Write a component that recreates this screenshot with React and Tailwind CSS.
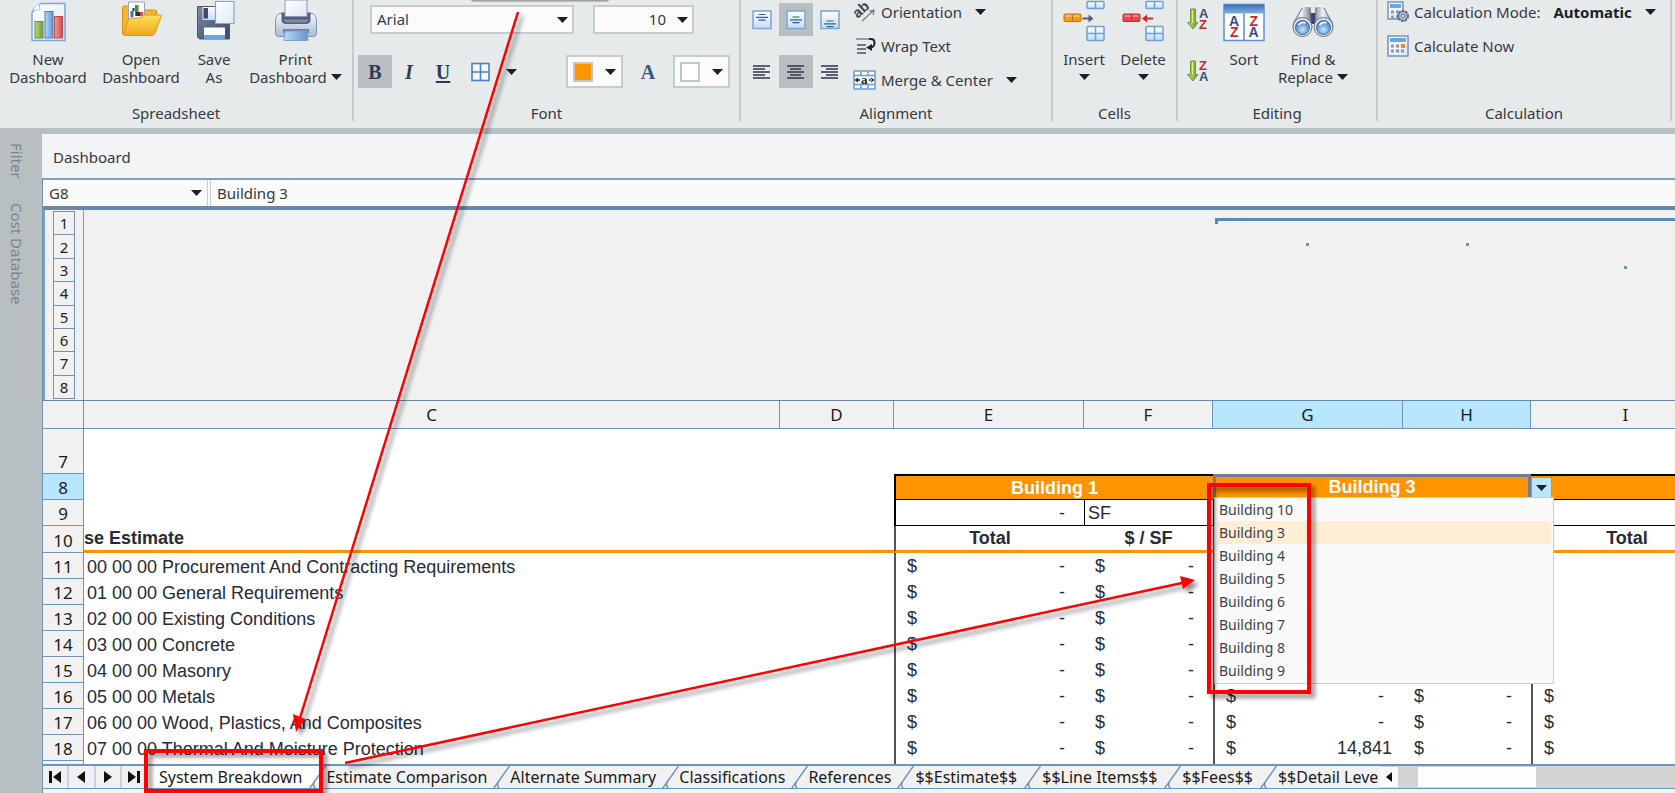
import React from "react";

const UI = "font-['Noto_Sans','Open_Sans',sans-serif]";

function Caret() {
  return (
    <svg className="shrink-0" width="11" height="6" viewBox="0 0 11 6" aria-hidden="true">
      <path d="M0 0h11L5.500 6z" fill="#1b1f29" />
    </svg>
  );
}

function Gradients() {
  return (
    <svg className="absolute" width="0" height="0" aria-hidden="true">
      <defs>
        <linearGradient id="paper" x1="0" y1="0" x2="1" y2="1">
          <stop offset="0" stopColor="#ffffff" />
          <stop offset="1" stopColor="#dfe9f5" />
        </linearGradient>
        <linearGradient id="gold" x1="0" y1="0" x2="0" y2="1">
          <stop offset="0" stopColor="#fde25a" />
          <stop offset="1" stopColor="#f2a51c" />
        </linearGradient>
        <linearGradient id="green" x1="0" y1="0" x2="1" y2="0">
          <stop offset="0" stopColor="#b9d67c" />
          <stop offset="1" stopColor="#6d9f3a" />
        </linearGradient>
        <linearGradient id="blue" x1="0" y1="0" x2="1" y2="0">
          <stop offset="0" stopColor="#b9d8f5" />
          <stop offset="1" stopColor="#5f96d0" />
        </linearGradient>
        <linearGradient id="red" x1="0" y1="0" x2="1" y2="0">
          <stop offset="0" stopColor="#f09c9a" />
          <stop offset="1" stopColor="#d04c4e" />
        </linearGradient>
        <linearGradient id="slate" x1="0" y1="0" x2="1" y2="1">
          <stop offset="0" stopColor="#7e8ba6" />
          <stop offset="1" stopColor="#3c4862" />
        </linearGradient>
        <linearGradient id="silver" x1="0" y1="0" x2="1" y2="0">
          <stop offset="0" stopColor="#8a90a3" />
          <stop offset="0.450" stopColor="#f4f5f8" />
          <stop offset="1" stopColor="#777e92" />
        </linearGradient>
        <linearGradient id="chrome" x1="0" y1="0" x2="0" y2="1">
          <stop offset="0" stopColor="#f2f5fa" />
          <stop offset="1" stopColor="#a9bad4" />
        </linearGradient>
        <linearGradient id="sky" x1="0" y1="0" x2="0" y2="1">
          <stop offset="0" stopColor="#ffffff" />
          <stop offset="1" stopColor="#c2dcf4" />
        </linearGradient>
        <linearGradient id="band" x1="0" y1="0" x2="0" y2="1">
          <stop offset="0" stopColor="#3b70b4" />
          <stop offset="1" stopColor="#7fb0e2" />
        </linearGradient>
        <radialGradient id="lens" cx="0.500" cy="0.650" r="0.600">
          <stop offset="0" stopColor="#c8e4fb" />
          <stop offset="1" stopColor="#3f7dc8" />
        </radialGradient>
      </defs>
    </svg>
  );
}

function ChartDocIcon() {
  return (
    <svg width="42" height="42" viewBox="0 0 42 42" aria-hidden="true">
      <path d="M13.500 3.500H38v37H5v-28z" fill="url(#paper)" stroke="#7ea6d6" strokeWidth="1.500" />
      <path d="M12 3.500L5 9.500l2 .5h6z" fill="#fff" stroke="#a9c4e4" />
      <rect x="8" y="21.500" width="8" height="16.500" fill="url(#green)" stroke="#6a9440" />
      <rect x="18" y="11.500" width="8" height="26.500" fill="url(#blue)" stroke="#4f7fb8" />
      <rect x="27.500" y="16.500" width="8" height="21.500" fill="url(#red)" stroke="#c04a4b" />
    </svg>
  );
}

function FolderIcon() {
  return (
    <svg width="42" height="42" viewBox="0 0 42 42" aria-hidden="true">
      <path d="M2.500 34V8q0-2 2-2h5l3 4h22q2 0 2 2v12z" fill="#f6b924" stroke="#d48c11" />
      <path d="M8.500 2h16v18l-16 6z" fill="#fff" stroke="#9aa3b0" />
      <path d="M10.500 11h3v6h-3z" fill="#3b6fc0" />
      <path d="M15 5h3.500v11H15z" fill="#4d8e38" />
      <path d="M12.500 8h2v3h-2zM16 12h4v4h-4z" fill="#273246" />
      <path d="M20 12h3v4h-3z" fill="#d94848" />
      <path d="M8.500 19.500q.6-1.500 2.500-1.500h9l4-3h16.500q1.200 0 .7 1.500L34.500 34q-.6 1.500-2.500 1.500H4.500q-1.500 0-1-1.500z" fill="url(#gold)" stroke="#db9617" />
    </svg>
  );
}

function SaveAsIcon() {
  return (
    <svg width="42" height="42" viewBox="0 0 42 42" aria-hidden="true">
      <path d="M4.500 6.500h32V39H6.500l-2-2z" fill="url(#slate)" stroke="#4a5670" />
      <rect x="9.500" y="7" width="16" height="13" fill="url(#sky)" />
      <rect x="10.500" y="8" width="4.500" height="10.500" fill="#3f4a62" />
      <rect x="11" y="27.500" width="21" height="11.500" fill="#fbfcfe" />
      <rect x="11" y="35" width="21" height="4" fill="#6fa3dc" />
      <path d="M22.500 1.500h18.500v22H22.500z" fill="url(#paper)" stroke="#8aa3c6" strokeWidth="1.200" />
    </svg>
  );
}

function PrinterIcon() {
  return (
    <svg width="42" height="42" viewBox="0 0 42 42" aria-hidden="true">
      <path d="M4 13.500h34q3 2 3.500 6v14q0 3-3 3h-35q-3 0-3-3v-14q.5-4 3.500-6z" fill="url(#chrome)" stroke="#7f95b8" />
      <path d="M6.500 12.500h29v7q0 4.500-5 4.500H11.500q-5 0-5-4.500z" fill="#566179" />
      <path d="M8.500 19.500h25q-1 3-4 3h-17q-3 0-4-3z" fill="#808ba3" />
      <path d="M10 0h22v16.500H10z" fill="url(#paper)" stroke="#8a9ab6" />
      <path d="M8 29h26v4H8z" fill="#6c80a3" />
      <path d="M10 31h22l1 9.500H9z" fill="url(#blue)" stroke="#7ba0cd" />
    </svg>
  );
}

function BordersIcon() {
  return (
    <svg width="20" height="20" viewBox="0 0 20 20" fill="#f4f8fc" stroke="#4d80bf" strokeWidth="1.600" aria-hidden="true">
      <rect x="1" y="1.500" width="17" height="17" />
      <path d="M9.500 1.500v17M1 10h17" />
    </svg>
  );
}

function VAlignIcon({ y }) {
  return (
    <svg width="20" height="20" viewBox="0 0 20 20" aria-hidden="true">
      <rect x="1" y="1" width="18" height="17.500" fill="url(#sky)" stroke="#7ba5d6" strokeWidth="1.500" />
      <g stroke="#2c5fa4" strokeWidth="1.200" transform={`translate(0 ${y})`}>
        <path d="M6.500 0h7M4 2.800h12M6.500 5.600h7" />
      </g>
    </svg>
  );
}

function HAlignIcon({ path }) {
  return (
    <svg width="18" height="16" viewBox="0 0 18 16" aria-hidden="true">
      <path d={path} stroke="#2c3448" strokeWidth="1.600" />
    </svg>
  );
}

function OrientationIcon() {
  return (
    <svg width="24" height="24" viewBox="0 0 24 24" aria-hidden="true">
      <text x="5" y="19" transform="rotate(-42 5 19)" fontFamily="Liberation Sans" fontWeight="700" fontSize="15" fill="#3a4150">ab</text>
      <path d="M9.500 21.500L22 10M22 10l-5 1M22 10l-1 5" stroke="#7a7f8a" strokeWidth="1.400" fill="none" />
    </svg>
  );
}

function WrapIcon() {
  return (
    <svg width="22" height="22" viewBox="0 0 22 22" fill="none" aria-hidden="true">
      <path d="M2 4h15" stroke="#7b8190" strokeWidth="1.500" />
      <path d="M3 10h9M3 14h9M3 18h9" stroke="#4b5262" strokeWidth="1.500" />
      <path d="M15 4h2q3.500 0 3.500 4t-4 4.500" stroke="#20242f" strokeWidth="2" />
      <path d="M12 12.500l6-3.500v7z" fill="#20242f" />
    </svg>
  );
}

function MergeIcon() {
  return (
    <svg width="23" height="20" viewBox="0 0 23 20" aria-hidden="true">
      <rect x="1" y="1" width="21" height="18" fill="#fff" stroke="#6d9bd0" strokeWidth="1.500" />
      <path d="M1 5.500h21M1 14.500h21M8 1v4.500M15 1v4.500M8 14.500V19M15 14.500V19" stroke="#6d9bd0" strokeWidth="1.500" />
      <path d="M1.500 10l3.500-2.500v5zM21.500 10L18 7.500v5zM4 9.300h3v1.400H4zM16 9.300h3v1.400h-3z" fill="#20242f" />
      <text x="8" y="13.500" fontFamily="Liberation Serif" fontWeight="700" fontSize="13" fill="#20242f">a</text>
    </svg>
  );
}

function CellsIcon({ remove }) {
  const tone = remove ? "#e8484c" : "#f49a16";
  const edge = remove ? "#b92f33" : "#c77308";
  return (
    <svg width="44" height="42" viewBox="0 0 44 42" aria-hidden="true">
      <g fill="url(#sky)" stroke="#6f9fd6" strokeWidth="1.500">
        <rect x="25" y="1.500" width="17" height="7" rx="1" />
        <path d="M33.500 1.500v7" />
        <rect x="25" y="26.500" width="17" height="14" rx="1" />
        <path d="M33.500 26.500v14M25 33.500h17" />
      </g>
      <rect x="2" y="14" width="17" height="7.500" rx="1" fill={tone} stroke={edge} />
      <path d="M3.500 16h6M11.500 16h6" stroke="#fff" strokeOpacity="0.500" strokeWidth="1.500" />
      <path d="M10.500 14v7.500" stroke={edge} />
      {remove ? (
        <path d="M32 17.500h-6v-3l-5 4 5 4v-3h6z" fill="#cf2529" />
      ) : (
        <path d="M20.500 17.500h6v-3l5 4-5 4v-3h-6z" fill="#56617c" />
      )}
    </svg>
  );
}

function SortArrowIcon({ top, bottom, topColor, bottomColor }) {
  return (
    <svg width="22" height="24" viewBox="0 0 22 24" aria-hidden="true">
      <path d="M3.500 1h5v13.500H11L6 21 .5 14.500h3z" fill="url(#green)" stroke="#6b9a2f" />
      <path d="M5.500 2v13" stroke="#e9ee7a" strokeWidth="1.200" />
      <text x="12" y="10" fontFamily="Liberation Sans" fontWeight="700" fontSize="13" fill={topColor}>{top}</text>
      <text x="12" y="21" fontFamily="Liberation Sans" fontWeight="700" fontSize="13" fill={bottomColor}>{bottom}</text>
    </svg>
  );
}

function SortIcon() {
  return (
    <svg width="42" height="42" viewBox="0 0 42 42" aria-hidden="true">
      <rect x="1" y="4.500" width="40" height="36" fill="#fff" stroke="#5c8fce" strokeWidth="1.500" />
      <rect x="1" y="4.500" width="40" height="9" fill="url(#band)" />
      <path d="M21 13v27" stroke="#5c8fce" strokeWidth="1.500" />
      <g fontFamily="Liberation Sans" fontWeight="700" fontSize="14">
        <text x="6" y="26" fill="#35507f">A</text>
        <text x="7" y="37" fill="#c42a2e">Z</text>
        <text x="26.500" y="26" fill="#c42a2e">Z</text>
        <text x="25.500" y="37" fill="#35507f">A</text>
      </g>
    </svg>
  );
}

function BinocularsIcon() {
  return (
    <svg width="42" height="42" viewBox="0 0 42 42" aria-hidden="true">
      <rect x="17" y="13" width="8" height="11" fill="#39456a" />
      <path d="M10 8q3-3 8-1l1 15-2 8-16-3q0-5 4-10z" fill="url(#silver)" stroke="#6c7388" />
      <path d="M32 8q-3-3-8-1l-1 15 2 8 16-3q0-5-4-10z" fill="url(#silver)" stroke="#6c7388" />
      <path d="M10 7.500q4-3.500 8-.5M24 7q4-3 8 .5" stroke="#f3f4f7" strokeWidth="2" fill="none" />
      <circle cx="10.500" cy="27" r="9.500" fill="#dfe3ea" stroke="#6b7288" />
      <circle cx="31.500" cy="27" r="9.500" fill="#dfe3ea" stroke="#6b7288" />
      <circle cx="10.500" cy="27.500" r="7" fill="url(#lens)" stroke="#44699f" />
      <circle cx="31.500" cy="27.500" r="7" fill="url(#lens)" stroke="#44699f" />
      <path d="M6.500 25q3-4 7-2M27.500 25q3-4 7-2" stroke="#fff" strokeWidth="1.800" fill="none" />
    </svg>
  );
}

function CalculatorIcon({ gear }) {
  return (
    <svg width="22" height="22" viewBox="0 0 22 22" aria-hidden="true">
      <rect x="1" y="1" width={gear ? 15 : 20} height={gear ? 17 : 20} fill="url(#paper)" stroke="#6f93c6" strokeWidth="1.500" />
      <rect x="3" y="3" width={gear ? 11 : 16} height="4" fill="#62abe8" />
      <g fill="#8598bb">
        <rect x="4" y="9.500" width="3" height="3" />
        <rect x="9" y="9.500" width="3" height="3" />
        <rect x="4" y="14.500" width="3" height="3" />
        <rect x="9" y="14.500" width="3" height="3" />
      </g>
      {gear ? (
        <g>
          <circle cx="16" cy="15" r="5" fill="#aeb8c9" stroke="#5b6a86" strokeWidth="2" strokeDasharray="2.600 1" />
          <circle cx="16" cy="15" r="4.300" fill="#b8c2d2" stroke="#65738e" />
          <circle cx="16" cy="15" r="1.700" fill="#eef1f5" stroke="#5b6a86" />
        </g>
      ) : (
        <g>
          <rect x="14" y="9" width="4" height="4" fill="#f08c1c" />
          <rect x="14" y="14.500" width="3" height="3" fill="#8598bb" />
        </g>
      )}
    </svg>
  );
}

function Group({ label, width, children }) {
  return (
    <section className={`${width} flex h-[121px] shrink-0 flex-col border-r-2 border-[#c5cacd]`}>
      <div className="flex h-[105px] items-start">{children}</div>
      <h2 className="text-center text-[15px] leading-4">{label}</h2>
    </section>
  );
}

function BigButton({ width, icon, lines, caret, caretBelow }) {
  return (
    <button type="button" className={`${width} flex shrink-0 flex-col items-center`}>
      {icon}
      <span className="mt-2 text-[15px] leading-[18px] whitespace-nowrap">
        {lines.map((line, i) => (
          <span key={line} className="flex items-center justify-center gap-1">
            {line}
            {caret && i === lines.length - 1 && <Caret />}
          </span>
        ))}
        {caretBelow && (
          <span className="flex h-[18px] items-center justify-center">
            <Caret />
          </span>
        )}
      </span>
    </button>
  );
}

function RowButton({ icon, children, caret }) {
  return (
    <button type="button" className="flex h-6 items-center gap-[5px] text-[15px] leading-6 whitespace-nowrap">
      <span className="flex w-[23px] justify-center">{icon}</span>
      {children}
      {caret && (
        <span className="ml-2">
          <Caret />
        </span>
      )}
    </button>
  );
}

function ToggleButton({ label, on, children }) {
  return (
    <button
      type="button"
      aria-label={label}
      aria-pressed={!!on}
      className={`flex h-[33px] w-[34px] items-center justify-center ${on ? "bg-[#b8bfc2]" : ""}`}
    >
      {children}
    </button>
  );
}

function Combo({ label, value, options, width, alignRight }) {
  return (
    <div className={`${width} relative flex h-[29px] items-center border-2 border-[#c8cccf] bg-[#fbfbfb]`}>
      <select
        aria-label={label}
        defaultValue={value}
        className={`h-full w-full appearance-none bg-transparent pr-[26px] pl-[5px] text-[15px] outline-none ${alignRight ? "text-right" : ""}`}
      >
        {options.map((o) => (
          <option key={o}>{o}</option>
        ))}
      </select>
      <span className="pointer-events-none absolute right-1">
        <Caret />
      </span>
    </div>
  );
}

function Swatch({ label, color }) {
  return (
    <button type="button" aria-label={label} className="flex h-[33px] w-[57px] items-center gap-3 border-2 border-[#c8cccf] bg-[#fbfbfb] pl-[5px]">
      <span className={`size-5 border-2 border-[#c3c6c9] ${color}`} />
      <Caret />
    </button>
  );
}

function Ribbon() {
  return (
    <header className="flex h-32 shrink-0 overflow-hidden bg-[#e7eaea] text-[#343a42]">
      <Group label="Spreadsheet" width="w-[354px]">
        <BigButton width="w-[96px]" icon={<ChartDocIcon />} lines={["New", "Dashboard"]} />
        <BigButton width="w-[90px]" icon={<FolderIcon />} lines={["Open", "Dashboard"]} />
        <BigButton width="w-[56px]" icon={<SaveAsIcon />} lines={["Save", "As"]} />
        <BigButton width="w-[107px]" icon={<PrinterIcon />} lines={["Print", "Dashboard"]} caret />
      </Group>
      <Group label="Font" width="w-[387px]">
        <div className="flex flex-col gap-[21px] pt-[5px]">
          <div className="flex gap-[19px] pl-4">
            <Combo label="Font family" value="Arial" options={["Arial", "Calibri"]} width="w-[204px]" />
            <Combo label="Font size" value="10" options={["8", "10", "12"]} width="w-[101px]" alignRight />
          </div>
          <div className="flex items-center pl-1 font-['Liberation_Serif',serif] text-xl text-[#2f3b55]">
            <ToggleButton label="Bold" on><span className="font-bold">B</span></ToggleButton>
            <ToggleButton label="Italic"><span className="font-bold italic">I</span></ToggleButton>
            <ToggleButton label="Underline"><span className="font-bold underline underline-offset-2">U</span></ToggleButton>
            <button type="button" aria-label="Borders" className="ml-[11px] flex items-center gap-[15px]">
              <BordersIcon />
              <Caret />
            </button>
            <span className="ml-[49px] flex items-center gap-[17px]">
              <Swatch label="Fill color" color="bg-[#ff9300]" />
              <span className="flex w-4 justify-center font-bold text-[#35588c]">A</span>
              <Swatch label="Font color" color="bg-white" />
            </span>
          </div>
        </div>
      </Group>
      <Group label="Alignment" width="w-[312px]">
        <div className="grid grid-cols-[34px_34px_34px] gap-y-[19px] pt-[3px] pl-1">
          <ToggleButton label="Align top"><VAlignIcon y={4.500} /></ToggleButton>
          <ToggleButton label="Align middle" on><VAlignIcon y={7} /></ToggleButton>
          <ToggleButton label="Align bottom"><VAlignIcon y={11} /></ToggleButton>
          <ToggleButton label="Align left"><HAlignIcon path="M0 2h17M0 5h12M0 8h17M0 11h12M0 14h17" /></ToggleButton>
          <ToggleButton label="Align center" on><HAlignIcon path="M0 2h17M3 5h11M0 8h17M3 11h11M0 14h17" /></ToggleButton>
          <ToggleButton label="Align right"><HAlignIcon path="M0 2h17M5 5h12M0 8h17M5 11h12M0 14h17" /></ToggleButton>
        </div>
        <div className="ml-[6px] flex flex-col items-start gap-[10px]">
          <RowButton icon={<OrientationIcon />} caret>Orientation</RowButton>
          <RowButton icon={<WrapIcon />}>Wrap Text</RowButton>
          <RowButton icon={<MergeIcon />} caret>Merge &amp; Center</RowButton>
        </div>
      </Group>
      <Group label="Cells" width="w-[125px]">
        <BigButton width="w-[62px]" icon={<CellsIcon />} lines={["Insert"]} caretBelow />
        <BigButton width="w-[56px]" icon={<CellsIcon remove />} lines={["Delete"]} caretBelow />
      </Group>
      <Group label="Editing" width="w-[200px]">
        <div className="flex w-9 flex-col items-center gap-7 pt-2 pl-1">
          <button type="button" aria-label="Sort ascending">
            <SortArrowIcon top="A" bottom="Z" topColor="#35507f" bottomColor="#c42a2e" />
          </button>
          <button type="button" aria-label="Sort descending">
            <SortArrowIcon top="Z" bottom="A" topColor="#c42a2e" bottomColor="#35507f" />
          </button>
        </div>
        <BigButton width="w-[60px]" icon={<SortIcon />} lines={["Sort"]} />
        <BigButton width="w-[78px]" icon={<BinocularsIcon />} lines={["Find &", "Replace"]} caret />
      </Group>
      <Group label="Calculation" width="w-[294px]">
        <div className="ml-2 flex flex-col items-start gap-[10px]">
          <RowButton icon={<CalculatorIcon gear />} caret>
            Calculation Mode: <strong className="ml-2 font-bold text-[#1b1f29]">Automatic</strong>
          </RowButton>
          <RowButton icon={<CalculatorIcon />}>Calculate Now</RowButton>
        </div>
      </Group>
    </header>
  );
}

function OutlinePanel() {
  return (
    <div className="flex h-[191px] shrink-0 border-b border-[#6488ab] bg-[#f1f1f1]">
      <div className="w-[41px] border-r border-l-2 border-[#7fa0c4] px-2 pt-px">
        <div className="flex h-[188px] flex-col divide-y divide-[#6f94bc] border border-[#6f94bc]">
          {[1, 2, 3, 4, 5, 6, 7, 8].map((n) => (
            <button key={n} type="button" className="flex-1 text-center text-[15px] leading-5 text-[#222]">
              {n}
            </button>
          ))}
        </div>
      </div>
      <div className="relative flex-1 overflow-hidden">
        <div className="absolute top-2 right-0 left-[1131px] h-[6px] border-t-3 border-l-3 border-[#5f88b5]" />
        <span className="absolute top-[33px] left-[1222px] size-[3px] bg-[#6f94bc]" />
        <span className="absolute top-[33px] left-[1382px] size-[3px] bg-[#6f94bc]" />
        <span className="absolute top-14 left-[1540px] size-[3px] bg-[#6f94bc]" />
      </div>
    </div>
  );
}

const divisions = [
  { name: "00 00 00 Procurement And Contracting Requirements" },
  { name: "01 00 00 General Requirements" },
  { name: "02 00 00 Existing Conditions" },
  { name: "03 00 00 Concrete" },
  { name: "04 00 00 Masonry" },
  { name: "05 00 00 Metals", g: "-", h: "-" },
  { name: "06 00 00 Wood, Plastics, And Composites", g: "-", h: "-" },
  { name: "07 00 00 Thermal And Moisture Protection", g: "14,841", h: "-" },
];

const buildings = ["Building 10", "Building 3", "Building 4", "Building 5", "Building 6", "Building 7", "Building 8", "Building 9"];

function RowHead({ n, selected }) {
  return (
    <th
      scope="row"
      className={`${UI} border-r border-b border-[#6f94bc] text-center align-bottom text-[17px] leading-[22px] font-normal text-[#1b1b1b] ${selected ? "bg-[#b8e6fc]" : "bg-[#f1f1f1]"}`}
    >
      {n}
    </th>
  );
}

function Money({ value, open, wall }) {
  const shown = value || open;
  return (
    <td className={`px-[11px] ${wall ? "border-l-2 border-[#555]" : ""}`}>
      {shown && (
        <div className="flex justify-between leading-6">
          <span>$</span>
          {value && <span className={value === "-" ? "pr-2" : ""}>{value}</span>}
        </div>
      )}
    </td>
  );
}

function Sheet() {
  const head = "border-r border-b border-[#6f94bc] text-[17px] font-normal text-[#1b1b1b]";
  return (
    <div className="min-h-0 flex-1 overflow-hidden bg-white">
      <table className="w-[1678px] table-fixed border-separate border-spacing-0 font-['Liberation_Sans',Arial,sans-serif] text-lg leading-[22px] text-[#252c36]">
        <colgroup>
          <col className="w-[41px]" />
          <col className="w-[696px]" />
          <col className="w-[114px]" />
          <col className="w-[190px]" />
          <col className="w-[129px]" />
          <col className="w-[190px]" />
          <col className="w-[128px]" />
          <col className="w-[190px]" />
        </colgroup>
        <thead className={UI}>
          <tr className="h-7">
            <td className={`${head} bg-[#f1f1f1]`} />
            {["C", "D", "E", "F", "G", "H", "I"].map((c) => (
              <th key={c} scope="col" className={`${head} ${c === "G" || c === "H" ? "bg-[#b8e6fc]" : "bg-[#f1f1f1]"}`}>
                {c}
              </th>
            ))}
          </tr>
        </thead>
        <tbody>
          <tr className="h-[45px]">
            <RowHead n={7} />
            <td colSpan={7} />
          </tr>
          <tr className="h-[26px] font-bold text-white">
            <RowHead n={8} selected />
            <td colSpan={2} />
            <td colSpan={2} className="border-t-2 border-b border-l-2 border-black bg-[#ff9300] text-center">
              Building 1
            </td>
            <td colSpan={2} className="relative border-3 border-[#6f7f93] bg-[#ff9300] text-center leading-5">
              Building 3
              <button
                type="button"
                aria-label="Choose building"
                aria-expanded="true"
                className="absolute top-0 -right-[24px] z-10 flex size-[21px] items-center justify-center border border-[#7fa0c4] bg-[#b8e6fc]"
              >
                <Caret />
              </button>
              <ul
                role="listbox"
                aria-label="Building"
                className={`${UI} absolute top-5 left-[-2px] z-10 w-[340px] border border-[#c9cdd2] bg-[#fafafa] px-[2px] pb-px text-left text-sm leading-[23px] font-normal text-[#3c424b]`}
              >
                {buildings.map((b) => (
                  <li
                    key={b}
                    role="option"
                    aria-selected={b === "Building 3"}
                    className={`pl-[2px] ${b === "Building 3" ? "bg-[#ffeed5]" : ""}`}
                  >
                    {b}
                  </li>
                ))}
              </ul>
            </td>
            <td className="border-t-2 border-b border-black bg-[#ff9300]" />
          </tr>
          <tr className="h-[26px]">
            <RowHead n={9} />
            <td colSpan={2} />
            <td className="border-b border-l-2 border-black pr-[19px] text-right">-</td>
            <td className="border-b border-l border-black pl-[3px]">SF</td>
            <td className="border-b border-l-2 border-black" />
            <td className="border-b border-l border-black" />
            <td className="border-b border-l-2 border-black" />
          </tr>
          <tr className="h-[27px] text-center font-bold">
            <RowHead n={10} />
            <td className="border-b-3 border-[#ff9300] text-left">se Estimate</td>
            <td className="border-b-3 border-[#ff9300]" />
            <td className="border-b-3 border-l-2 border-b-[#ff9300] border-l-[#555]">Total</td>
            <td className="border-b-3 border-[#ff9300]">$ / SF</td>
            <td className="border-b-3 border-l-2 border-b-[#ff9300] border-l-[#555]" />
            <td className="border-b-3 border-[#ff9300]" />
            <td className="border-b-3 border-l-2 border-b-[#ff9300] border-l-[#555]">Total</td>
          </tr>
          {divisions.map((d, i) => (
            <tr key={d.name} className="h-[26px]">
              <RowHead n={11 + i} />
              <td className="pb-px pl-[3px] align-bottom whitespace-nowrap">{d.name}</td>
              <td />
              <Money wall value="-" />
              <Money value="-" />
              <Money wall value={d.g} />
              <Money value={d.h} />
              <Money wall open={!!d.g} />
            </tr>
          ))}
          <tr className="h-[26px]">
            <td className="border-r border-[#6f94bc] bg-[#f1f1f1]" />
            <td colSpan={2} />
            <td className="border-l-2 border-[#555]" />
            <td />
            <td className="border-l-2 border-[#555]" />
            <td />
            <td className="border-l-2 border-[#555]" />
          </tr>
        </tbody>
      </table>
    </div>
  );
}

const tabs = [
  "System Breakdown",
  "Estimate Comparison",
  "Alternate Summary",
  "Classifications",
  "References",
  "$$Estimate$$",
  "$$Line Items$$",
  "$$Fees$$",
  "$$Detail Leve",
];

function TabEdge({ active }) {
  return (
    <svg className="shrink-0" width="23" height="24" viewBox="0 0 23 24" aria-hidden="true">
      {active && <path d="M0 0h23L6 24H0z" fill="#fff" />}
      <path d="M6 24L11 17Q9.500 20 12 22L15 24z" fill="#fff" />
      <path d="M5.500 24L22.500 0M11.500 15.500Q9.500 20 12 22T17 23.500" fill="none" stroke="#6f94bc" strokeWidth="1.500" />
    </svg>
  );
}

const navs = [
  ["First sheet", "M1 0h3v12H1zM13 0v12L5 6z"],
  ["Previous sheet", "M11 0v12L3 6z"],
  ["Next sheet", "M3 0v12l8-6z"],
  ["Last sheet", "M1 0v12l8-6zM10 0h3v12h-3z"],
];

function TabBar() {
  return (
    <footer className="mb-1 flex h-[25px] shrink-0 items-stretch border-t-2 border-b border-[#6f94bc] bg-[#f1f1f1]">
      <div className="flex w-[103px] shrink-0 divide-x-2 divide-[#c4d2e2]">
        {navs.map(([label, d]) => (
          <button key={label} type="button" aria-label={label} className="flex flex-1 items-center justify-center">
            <svg width="14" height="12" viewBox="0 0 14 12" aria-hidden="true">
              <path d={d} fill="#111" />
            </svg>
          </button>
        ))}
      </div>
      <nav className="flex min-w-0 flex-1 overflow-hidden" aria-label="Sheets">
        {tabs.map((t, i) => (
          <React.Fragment key={t}>
            <a
              href={`#sheet-${i + 1}`}
              className={`shrink-0 text-base leading-[23px] whitespace-nowrap text-[#1b1b1b] ${i === 0 ? "bg-white pr-px pl-[13px]" : ""} ${t.startsWith("$$") ? "px-px" : ""}`}
            >
              {t}
            </a>
            {i < tabs.length - 1 && <TabEdge active={i === 0} />}
          </React.Fragment>
        ))}
      </nav>
      <div className="flex w-[295px] shrink-0 items-center bg-[#d3d3d3]">
        <button type="button" aria-label="Scroll left" className="flex h-5 w-[18px] items-center justify-center bg-[#fafafa]">
          <svg width="6" height="10" viewBox="0 0 6 10" aria-hidden="true">
            <path d="M6 0v10L0 5z" fill="#111" />
          </svg>
        </button>
        <span className="ml-5 h-5 w-[118px] bg-[#fdfdfd]" />
      </div>
    </footer>
  );
}

function Annotations() {
  return (
    <svg className="pointer-events-none absolute inset-0 z-20 h-full w-full" aria-hidden="true">
      <defs>
        <filter id="shade" filterUnits="userSpaceOnUse" x="0" y="-20" width="2000" height="900">
          <feDropShadow dx="4" dy="4" stdDeviation="2" floodColor="#000" floodOpacity="0.450" />
        </filter>
      </defs>
      <rect x="472" y="-7" width="136" height="8" fill="#b4b6b7" stroke="#8d9091" />
      <g filter="url(#shade)" fill="none" stroke="#ff0000">
        <path d="M518 12L300 718" strokeWidth="2.500" />
        <path d="M296 732L293 714L305 719z" fill="#ff0000" stroke="none" />
        <path d="M345 763L1182 583" strokeWidth="2.500" />
        <path d="M1195 580L1180 576L1183 589z" fill="#ff0000" stroke="none" />
        <rect x="146" y="751" width="175" height="40" strokeWidth="4" />
        <rect x="1209" y="485" width="100" height="207" strokeWidth="4" />
      </g>
    </svg>
  );
}

export default function App() {
  return (
    <div className={`${UI} relative flex h-screen flex-col overflow-hidden bg-[#b8bfc2] text-[15px] text-[#343a42]`}>
      <Gradients />
      <Ribbon />
      <div className="flex min-h-0 flex-1 pt-[6px]">
        <aside className="flex w-[42px] shrink-0 flex-col items-center gap-6 pt-[9px] pr-2 text-[#7b8488]">
          <button type="button" className="[writing-mode:vertical-rl]">Filter</button>
          <button type="button" className="[writing-mode:vertical-rl]">Cost Database</button>
        </aside>
        <main className="flex min-w-0 flex-1 flex-col bg-[#f3f4f5]">
          <h1 className="h-[44px] shrink-0 pl-[11px] text-[15px] leading-[46px]">Dashboard</h1>
          <div className="flex min-h-0 flex-1 flex-col border-l border-[#6f94bc]">
            <div className="flex h-[32px] shrink-0 border-t-2 border-b-4 border-t-[#7f9fc4] border-b-[#6488ab] bg-[#fafafa]">
              <div className="relative flex w-[164px] items-center">
                <input aria-label="Cell" defaultValue="G8" className="w-full bg-transparent pl-[6px] outline-none" />
                <span className="absolute right-[5px]">
                  <Caret />
                </span>
              </div>
              <span className="w-[4px] border-x border-[#c8ccd0]" />
              <input aria-label="Formula" defaultValue="Building 3" className="flex-1 bg-transparent pl-[6px] outline-none" />
            </div>
            <OutlinePanel />
            <Sheet />
            <TabBar />
          </div>
        </main>
      </div>
      <Annotations />
    </div>
  );
}
